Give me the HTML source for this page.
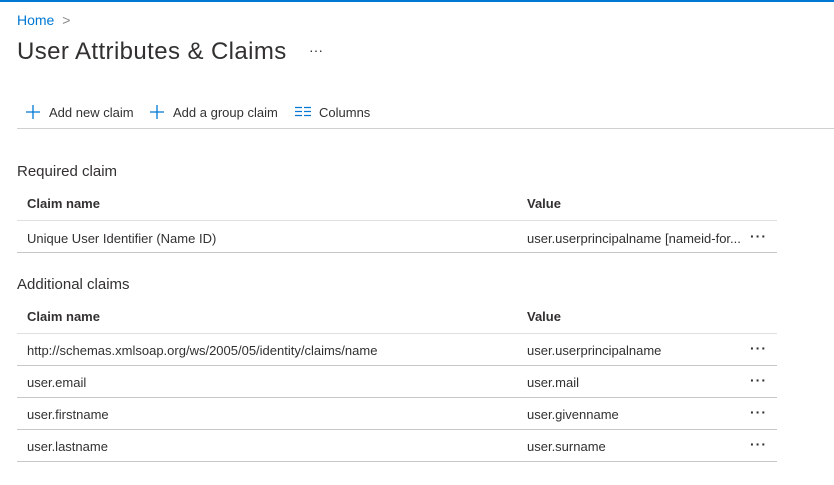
<!DOCTYPE html><html><head><style>
body{margin:0;width:834px;height:485px;background:#fff;font-family:"Liberation Sans",sans-serif;color:#323130;position:relative;overflow:hidden}
.a{position:absolute;white-space:nowrap}
.t{font-size:13px}
.h{font-size:13px;font-weight:bold;color:#323130}
.ln{position:absolute;left:17px;width:760px;height:1px;background:#e1dfdd}
.d{position:absolute;left:750px;font-size:14px;font-weight:bold;letter-spacing:1px;color:#323130}
</style></head><body>
<div class="a" style="left:0;top:0;width:834px;height:2px;background:#0078d4"></div>
<div class="a t" style="left:17px;top:12px;font-size:14px;color:#0078d4">Home <span style="color:#8a8886;margin-left:4px">&gt;</span></div>
<div class="a" style="left:17px;top:38px;font-size:24px;letter-spacing:0.4px;color:#323130">User Attributes &amp; Claims</div>
<div class="a" style="left:309px;top:42px;font-size:14px">···</div>
<svg class="a" style="left:25px;top:104px" width="16" height="16"><path d="M8 1v14M1 8h14" stroke="#0078d4" stroke-width="1.3"/></svg>
<div class="a t" style="left:49px;top:105px">Add new claim</div>
<svg class="a" style="left:149px;top:104px" width="16" height="16"><path d="M8 1v14M1 8h14" stroke="#0078d4" stroke-width="1.3"/></svg>
<div class="a t" style="left:173px;top:105px">Add a group claim</div>
<svg class="a" style="left:295px;top:106px" width="16" height="12"><path d="M0 1.5h7M9 1.5h7M0 5.5h7M9 5.5h7M0 9.5h7M9 9.5h7" stroke="#0078d4" stroke-width="1.2"/></svg>
<div class="a t" style="left:319px;top:105px">Columns</div>
<div class="a" style="left:17px;top:128px;width:817px;height:1px;background:#d2d0ce"></div>
<div class="a" style="left:17px;top:163px;font-size:15px">Required claim</div>
<div class="a h" style="left:27px;top:196px">Claim name</div><div class="a h" style="left:527px;top:196px">Value</div>
<div class="ln" style="top:220px"></div>
<div class="a t" style="left:27px;top:231px">Unique User Identifier (Name ID)</div><div class="a t" style="left:527px;top:231px">user.userprincipalname [nameid-for...</div><div class="d" style="top:228px">···</div>
<div class="ln" style="top:252px;background:#c8c6c4"></div>
<div class="a" style="left:17px;top:276px;font-size:15px">Additional claims</div>
<div class="a h" style="left:27px;top:309px">Claim name</div><div class="a h" style="left:527px;top:309px">Value</div>
<div class="ln" style="top:333px"></div>
<div class="a t" style="left:27px;top:343px">http://schemas.xmlsoap.org/ws/2005/05/identity/claims/name</div><div class="a t" style="left:527px;top:343px">user.userprincipalname</div><div class="d" style="top:340px">···</div>
<div class="ln" style="top:365px;background:#c8c6c4"></div>
<div class="a t" style="left:27px;top:375px">user.email</div><div class="a t" style="left:527px;top:375px">user.mail</div><div class="d" style="top:372px">···</div>
<div class="ln" style="top:397px;background:#c8c6c4"></div>
<div class="a t" style="left:27px;top:407px">user.firstname</div><div class="a t" style="left:527px;top:407px">user.givenname</div><div class="d" style="top:404px">···</div>
<div class="ln" style="top:429px;background:#c8c6c4"></div>
<div class="a t" style="left:27px;top:439px">user.lastname</div><div class="a t" style="left:527px;top:439px">user.surname</div><div class="d" style="top:436px">···</div>
<div class="ln" style="top:461px;background:#c8c6c4"></div>
</body></html>
